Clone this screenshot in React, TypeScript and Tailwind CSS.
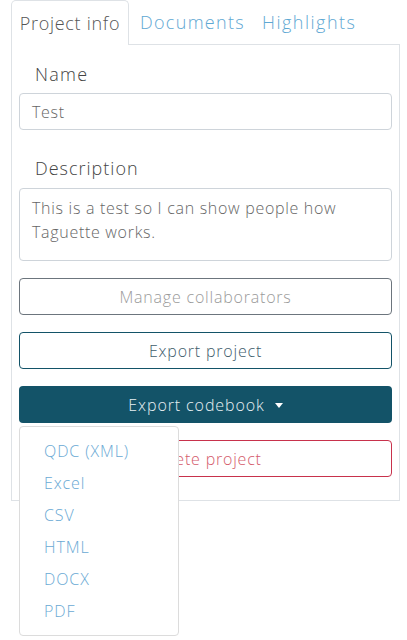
import * as React from "react"

const font = { fontFamily: '"Open Sans", "Noto Sans", sans-serif' }

export default function App() {
  const [open] = React.useState(true)
  const formats = ["QDC (XML)", "Excel", "CSV", "HTML", "DOCX", "PDF"]

  return (
    <div className="min-h-[640px] bg-white pl-[11px] pr-[7px] font-light" style={font}>
      <div className="flex h-[45px]">
        <div className="flex w-[118px] items-center justify-center rounded-t-[5px] border border-b-0 border-[#dee2e6] text-[18px] tracking-[0.7px] text-[#555]">
          Project info
        </div>
        <div className="flex flex-1 items-center border-b border-[#dee2e6] text-[18px] text-[#5fa8d3]">
          <span className="ml-[11px] tracking-[1.3px]">Documents</span>
          <span className="ml-[17px] tracking-[1.5px]">Highlights</span>
        </div>
      </div>

      <div className="border border-t-0 border-[#dee2e6] px-[7px] pt-[17px] pb-[23px]">
        <label className="block pl-[16px] text-[18px] leading-[24px] tracking-[1.3px] text-[#444]">Name</label>
        <div className="mt-[7px] flex h-[37px] items-center rounded-[4px] border border-[#ced4da] px-[12px] text-[16px] tracking-[0.7px] text-[#666]">
          Test
        </div>

        <label className="mt-[26px] block pl-[16px] text-[18px] leading-[24px] tracking-[1px] text-[#444]">Description</label>
        <div className="mt-[8px] h-[73px] rounded-[4px] border border-[#ced4da] px-[12px] pt-[7px] text-[16px] leading-[24px] tracking-[0.7px] text-[#666]">
          This is a test so I can show people how Taguette works.
        </div>

        <button className="mt-[17px] flex h-[37px] w-full items-center justify-center rounded-[4px] border border-[#6c757d] text-[16px] tracking-[0.8px] text-[#9a9a9a]">
          Manage collaborators
        </button>
        <button className="mt-[17px] flex h-[37px] w-full items-center justify-center rounded-[4px] border border-[#135368] text-[16px] tracking-[0.8px] text-[#3e5c6b]">
          Export project
        </button>

        <div className="relative mt-[17px]">
          <button className="flex h-[37px] w-full items-center justify-center gap-[10px] rounded-[4px] bg-[#135368] text-[16px] tracking-[0.9px] text-[#e8f0f3]">
            Export codebook
            <span className="mt-[1px] h-0 w-0 border-x-[4px] border-t-[5px] border-x-transparent border-t-white" />
          </button>
          {open && (
            <div className="absolute left-0 top-[40px] z-10 w-[160px] rounded-[4px] border border-[#dcdcdc] bg-white py-[8px]">
              {formats.map((f) => (
                <div key={f} className="flex h-[32px] items-center pl-[24px] text-[16px] tracking-[0.9px] text-[#6aa9d4]">
                  {f}
                </div>
              ))}
            </div>
          )}
        </div>

        <button className="mt-[17px] flex h-[37px] w-full items-center justify-center rounded-[4px] border border-[#c8324c] text-[16px] tracking-[0.8px] text-[#d45a6a]">
          Delete project
        </button>
      </div>
    </div>
  )
}
